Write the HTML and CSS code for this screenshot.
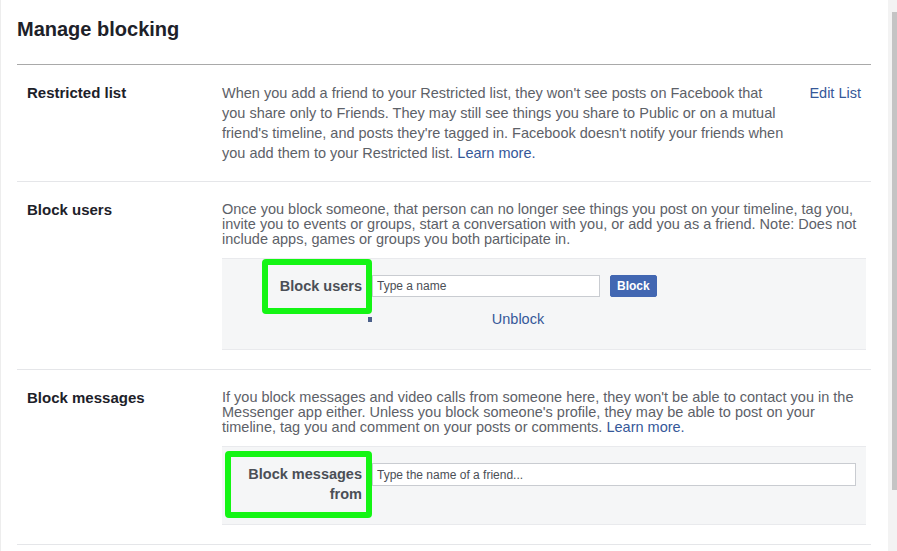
FILE: index.html
```html
<!DOCTYPE html>
<html lang="en">
<head>
  <meta charset="UTF-8">
  <meta name="viewport" content="width=device-width, initial-scale=1.0">
  <title>Manage blocking</title>
  <link rel="stylesheet" href="styles.css">
</head>
<body>
  <div class="window">
    <main class="settings">
      <h2 class="title">Manage blocking</h2>

      <section class="row">
        <h3 class="row-label">Restricted list</h3>
        <p class="row-desc">When you add a friend to your Restricted list, they won't see posts on Facebook that you share only to Friends. They may still see things you share to Public or on a mutual friend's timeline, and posts they're tagged in. Facebook doesn't notify your friends when you add them to your Restricted list. <a href="#" class="link">Learn more.</a></p>
        <a href="#" class="link row-action">Edit List</a>
      </section>

      <section class="row row-compact">
        <h3 class="row-label">Block users</h3>
        <div class="row-body">
          <p class="row-desc">Once you block someone, that person can no longer see things you post on your timeline, tag you, invite you to events or groups, start a conversation with you, or add you as a friend. Note: Does not include apps, games or groups you both participate in.</p>
          <div class="block-box">
            <span class="highlight highlight-users"></span>
            <label class="box-label" for="block-user">Block users</label>
            <div class="box-field">
              <input id="block-user" class="text-input input-short" type="text" placeholder="Type a name">
              <button class="block-btn">Block</button>
            </div>
            <div class="box-extra">
              <span class="dot"></span>
              <a href="#" class="link">Unblock</a>
            </div>
          </div>
        </div>
      </section>

      <section class="row row-compact">
        <h3 class="row-label">Block messages</h3>
        <div class="row-body">
          <p class="row-desc">If you block messages and video calls from someone here, they won't be able to contact you in the Messenger app either. Unless you block someone's profile, they may be able to post on your timeline, tag you and comment on your posts or comments. <a href="#" class="link">Learn more.</a></p>
          <div class="block-box">
            <span class="highlight highlight-messages"></span>
            <label class="box-label" for="block-msg">Block messages from</label>
            <div class="box-field">
              <input id="block-msg" class="text-input input-wide" type="text" placeholder="Type the name of a friend...">
            </div>
          </div>
        </div>
      </section>
    </main>
    <div class="scrollbar"><div class="scrollbar-thumb"></div></div>
  </div>
</body>
</html>
```

FILE: styles.css
```css
* { box-sizing: border-box; }
body { margin: 0; overflow: hidden; background: #fff; font-family: "Liberation Sans", Arial, sans-serif; color: #1d2129; }
.window { display: flex; height: 551px; }

.settings { flex: 1; padding: 0 17px 0 16px; border-left: 1px solid #ededed; }
.title { margin: 0; padding: 17px 0 23px; font-size: 20px; line-height: 24px; font-weight: bold; color: #1d2129; border-bottom: 1px solid #a9a9a9; }

.row { display: grid; grid-template-columns: 195px 1fr auto; padding: 18px 10px 18px 10px; border-bottom: 1px solid #e5e6e9; font-size: 14.5px; line-height: 20px; }
.row-label { margin: 0; font-size: 15px; font-weight: bold; color: #1d2129; }
.row-desc { margin: 0; color: #5d6168; }
.row-action { margin-left: 22px; }
.link { color: #365899; text-decoration: none; }

.row-compact { padding: 20px 5px 19px 10px; line-height: 15px; }
.row-compact .row-body { grid-column: 2 / -1; }

.block-box { position: relative; display: grid; grid-template-columns: 140px 1fr; column-gap: 10px; margin-top: 11px; padding: 16px 10px 20px 0; background: #f5f6f7; border-top: 1px solid #e9eaed; border-bottom: 1px solid #e9eaed; }
.box-label { padding-top: 1px; font-size: 14.5px; line-height: 20px; font-weight: bold; color: #4b4f56; text-align: right; }
.box-field { display: flex; gap: 10px; align-items: flex-start; }
.text-input { height: 22px; padding: 0 4px; border: 1px solid #c9ccd1; background: #fff; font-family: "Liberation Sans", Arial, sans-serif; font-size: 12px; color: #1d2129; outline: none; }
.text-input::placeholder { color: #4b4f56; }
.input-short { width: 228px; }
.input-wide { flex: 1; height: 23px; }
.block-btn { height: 22px; padding: 0 6px; border: 1px solid #4267b2; border-radius: 2px; background: #4267b2; color: #fff; font-family: "Liberation Sans", Arial, sans-serif; font-size: 12px; font-weight: bold; }

.box-extra { position: relative; grid-column: 2; width: 285px; margin-top: 12px; padding-left: 7px; text-align: center; font-size: 14.5px; line-height: 20px; }
.box-extra .dot { position: absolute; left: -4px; top: 8px; width: 4px; height: 5px; background: #4b5f8a; }

/* screenshot annotation boxes */
.highlight { position: absolute; border: 6px solid #14f514; border-radius: 4px; pointer-events: none; }
.highlight-users { left: 40px; top: 0; width: 110px; height: 55px; }
.highlight-messages { left: 3px; top: 4px; width: 147px; height: 67px; }

.scrollbar { width: 9px; padding: 12px 0 0 4px; background: #f3f3f3; }
.scrollbar-thumb { height: 478px; background: #c4c4c4; }
```
